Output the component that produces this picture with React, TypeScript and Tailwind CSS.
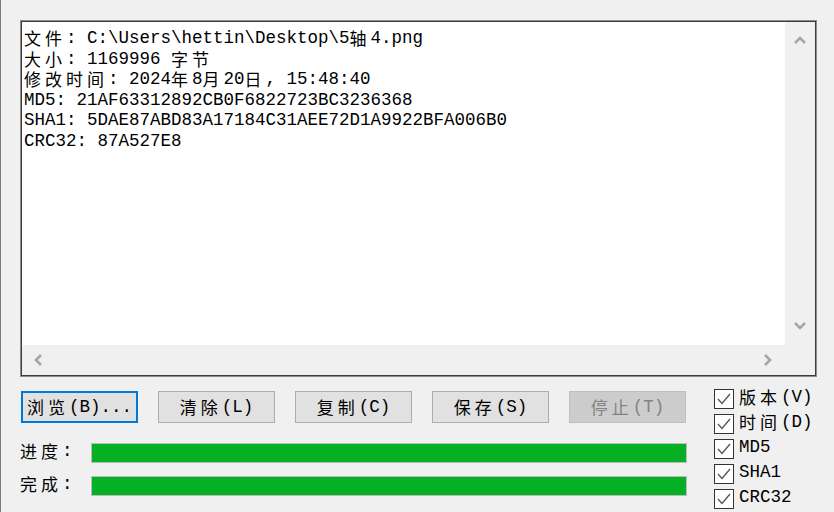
import type { ReactNode } from 'react';

const LINES = [
  '文件: C:\\Users\\hettin\\Desktop\\5轴4.png',
  '大小: 1169996 字节',
  '修改时间: 2024年8月20日, 15:48:40',
  'MD5: 21AF63312892CB0F6822723BC3236368',
  'SHA1: 5DAE87ABD83A17184C31AEE72D1A9922BFA006B0',
  'CRC32: 87A527E8',
];

const BUTTONS = [
  { label: '浏览(B)...', kind: 'focus' },
  { label: '清除(L)', kind: 'normal' },
  { label: '复制(C)', kind: 'normal' },
  { label: '保存(S)', kind: 'normal' },
  { label: '停止(T)', kind: 'disabled' },
];

const CHECKS = ['版本(V)', '时间(D)', 'MD5', 'SHA1', 'CRC32'];

const CJK = /[\u3000-\u9fff\uff00-\uffef]/;

// SimSun-ish metrics: half-width latin 10.5px, full-width CJK 21px
function Mixed({ text }: { text: string }) {
  const runs: { cjk: boolean; s: string }[] = [];
  for (const ch of text) {
    const cjk = CJK.test(ch);
    const last = runs[runs.length - 1];
    if (last && last.cjk === cjk) last.s += ch;
    else runs.push({ cjk, s: ch });
  }
  return (
    <>
      {runs.map((r, i) =>
        r.cjk ? (
          <span
            key={i}
            className="inline-block whitespace-pre align-top font-['Noto_Sans_CJK_SC',sans-serif] text-[17px] leading-[20px] tracking-[4px]"
          >
            {r.s}
          </span>
        ) : (
          <span
            key={i}
            className="inline-block whitespace-pre align-top font-['Liberation_Mono',monospace] text-[17.5px] leading-[20px]"
          >
            {r.s}
          </span>
        )
      )}
    </>
  );
}

function Chevron({ dir }: { dir: 'up' | 'down' | 'left' | 'right' }) {
  const pts = {
    up: '2,9 7,4 12,9',
    down: '2,4 7,9 12,4',
    left: '9,2 4,7 9,12',
    right: '4,2 9,7 4,12',
  }[dir];
  return (
    <svg width="14" height="14" viewBox="0 0 14 14">
      <polyline points={pts} fill="none" stroke="#a6a6a6" strokeWidth="2.6" />
    </svg>
  );
}

function Button({ label, kind }: { label: string; kind: string }) {
  const cls =
    kind === 'focus'
      ? 'border-2 border-[#0078d7] bg-[#e1e1e1] text-black'
      : kind === 'disabled'
        ? 'border border-[#bfbfbf] bg-[#cccccc] text-[#838383]'
        : 'border border-[#adadad] bg-[#e1e1e1] text-black';
  return (
    <div className={`flex h-[32px] w-[117px] items-center justify-center whitespace-nowrap ${cls}`}>
      <Mixed text={label} />
    </div>
  );
}

function ProgressRow({ label }: { label: string }) {
  return (
    <div className="flex h-[20px] items-center">
      <div className="w-[71px] whitespace-nowrap">
        <Mixed text={label} />
      </div>
      <div className="h-[20px] flex-1 border border-[#bcbcbc] bg-[#e6e6e6]">
        <div className="h-full w-full bg-[#06b025]" />
      </div>
    </div>
  );
}

function Check({ label }: { label: string }): ReactNode {
  return (
    <div className="flex h-[25px] items-center">
      <div className="flex h-[20px] w-[20px] items-center justify-center border border-[#333] bg-white">
        <svg width="16" height="16" viewBox="0 0 16 16">
          <polyline points="2,8 6,12.5 14,3" fill="none" stroke="#555" strokeWidth="1.3" />
        </svg>
      </div>
      <div className="ml-[5px] whitespace-nowrap">
        <Mixed text={label} />
      </div>
    </div>
  );
}

export default function App() {
  return (
    <div className="h-[512px] w-[834px] overflow-hidden border-l border-[#7a7a7a] bg-[#f0f0f0] pl-[19px] pt-[20px] text-black">
      {/* result box */}
      <div className="h-[357px] w-[797px] border border-[#8c8c8c]">
        <div className="grid h-full w-full grid-cols-[1fr_30px] grid-rows-[1fr_30px] border border-[#3c3c3c]">
          <div className="overflow-hidden bg-white pl-[2px] pt-[6px]">
            {LINES.map((l) => (
              <div key={l} className="h-[20.6px] whitespace-nowrap">
                <Mixed text={l} />
              </div>
            ))}
          </div>
          <div className="flex flex-col items-center justify-between bg-[#f0f0f0] py-[12px]">
            <Chevron dir="up" />
            <Chevron dir="down" />
          </div>
          <div className="flex items-center justify-between bg-[#f0f0f0] px-[10px]">
            <Chevron dir="left" />
            <Chevron dir="right" />
          </div>
          <div className="bg-[#f0f0f0]" />
        </div>
      </div>

      <div className="flex">
        <div className="w-[667px] pt-[14px]">
          <div className="flex gap-[20px] pl-[1px]">
            {BUTTONS.map((b) => (
              <Button key={b.label} label={b.label} kind={b.kind} />
            ))}
          </div>
          <div className="mt-[20px] flex flex-col gap-[13px]">
            <ProgressRow label="进度:" />
            <ProgressRow label="完成:" />
          </div>
        </div>
        <div className="ml-[27px] pt-[9px]">
          {CHECKS.map((c) => (
            <Check key={c} label={c} />
          ))}
        </div>
      </div>
    </div>
  );
}
